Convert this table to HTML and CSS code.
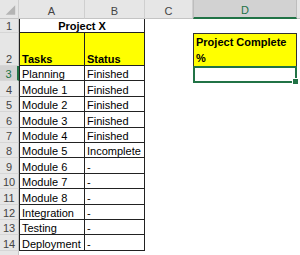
FILE: index.html
```html
<!DOCTYPE html>
<html>
<head>
<meta charset="utf-8">
<link rel="stylesheet" href="styles.css">
</head>
<body>
<div class="sheet">
  <div class="hdr corner"><svg width="19" height="18" viewBox="0 0 19 18"><polygon points="16,5 16,15 6,15" fill="#b4b4b4"/></svg></div>
  <div class="hdr col">A</div>
  <div class="hdr col">B</div>
  <div class="hdr col">C</div>
  <div class="hdr col sel">D</div>
  <div class="hdr col last"></div>

  <div class="rh">1</div>
  <div class="c title">Project X</div>
  <div class="c"></div><div class="c"></div><div class="c"></div>

  <div class="rh r2">2</div>
  <div class="c t a y b">Tasks</div>
  <div class="c t y b">Status</div>
  <div class="c"></div>
  <div class="c pc">Project Complete %</div>
  <div class="c"></div>

  <div class="rh rsel">3</div>
  <div class="c t a">Planning</div><div class="c t">Finished</div><div class="c"></div>
  <div class="c cur"><span class="handle"></span></div><div class="c"></div>

  <div class="rh">4</div>
  <div class="c t a">Module 1</div><div class="c t">Finished</div><div class="c"></div><div class="c"></div><div class="c"></div>
  <div class="rh">5</div>
  <div class="c t a">Module 2</div><div class="c t">Finished</div><div class="c"></div><div class="c"></div><div class="c"></div>
  <div class="rh">6</div>
  <div class="c t a">Module 3</div><div class="c t">Finished</div><div class="c"></div><div class="c"></div><div class="c"></div>
  <div class="rh">7</div>
  <div class="c t a">Module 4</div><div class="c t">Finished</div><div class="c"></div><div class="c"></div><div class="c"></div>
  <div class="rh">8</div>
  <div class="c t a">Module 5</div><div class="c t">Incomplete</div><div class="c"></div><div class="c"></div><div class="c"></div>
  <div class="rh">9</div>
  <div class="c t a">Module 6</div><div class="c t">-</div><div class="c"></div><div class="c"></div><div class="c"></div>
  <div class="rh">10</div>
  <div class="c t a">Module 7</div><div class="c t">-</div><div class="c"></div><div class="c"></div><div class="c"></div>
  <div class="rh">11</div>
  <div class="c t a">Module 8</div><div class="c t">-</div><div class="c"></div><div class="c"></div><div class="c"></div>
  <div class="rh">12</div>
  <div class="c t a">Integration</div><div class="c t">-</div><div class="c"></div><div class="c"></div><div class="c"></div>
  <div class="rh">13</div>
  <div class="c t a">Testing</div><div class="c t">-</div><div class="c"></div><div class="c"></div><div class="c"></div>
  <div class="rh">14</div>
  <div class="c t a">Deployment</div><div class="c t">-</div><div class="c"></div><div class="c"></div><div class="c"></div>
  <div class="rh"></div>
  <div class="c"></div><div class="c"></div><div class="c"></div><div class="c"></div><div class="c"></div>
</div>
</body>
</html>
```
FILE: styles.css
```css
html, body {
  margin: 0;
  padding: 0;
  background: #ffffff;
}
body {
  font-family: "Liberation Sans", Arial, sans-serif;
  font-size: 11px;
  color: #000;
  overflow: hidden;
}
.sheet {
  display: grid;
  grid-template-columns: 19px 66px 60px 48px 104px 3px;
  grid-template-rows: 19px 14px 33px 15px 16px 15px 16px 15px 15px 16px 15px 16px 15px 15px 16px 10px;
  width: 300px;
  height: 255px;
}
.sheet > div {
  box-sizing: border-box;
  min-width: 0;
  overflow: visible;
  position: relative;
}
.hdr {
  background: #e6e6e6;
  border-bottom: 1px solid #c4c4c4;
  border-right: 1px solid #cfcfcf;
  color: #444;
  display: flex;
  align-items: center;
  justify-content: center;
  font-size: 11px;
  padding-top: 3px;
}
.corner {
  padding: 0;
  align-items: flex-start;
  justify-content: flex-start;
}
.corner svg { display: block; }
.hdr.sel {
  background: #d2d2d2;
  border-bottom: 2px solid #217346;
  border-left: 1px solid #bdbdbd;
  border-right: 1px solid #bdbdbd;
  color: #217346;
}
.hdr.last { border-right: none; }
.rh {
  background: #e6e6e6;
  border-right: 1px solid #c4c4c4;
  border-bottom: 1px solid #d6d6d6;
  color: #444;
  display: flex;
  align-items: flex-end;
  justify-content: center;
  padding-bottom: 0;
  font-size: 11px;
}
.rh.rsel {
  background: #d2d2d2;
  color: #217346;
  border-right: 2px solid #217346;
}
.c {
  display: flex;
  align-items: flex-end;
  padding: 0 0 0 2px;
  white-space: nowrap;
}
.title {
  grid-column: span 2;
  justify-content: center;
  font-weight: bold;
  border-right: 1px solid #222;
  border-bottom: 1px solid #222;
  border-left: 1px solid #222;
  padding-left: 0;
}
.t {
  border-right: 1px solid #222;
  border-bottom: 1px solid #222;
}
.a {
  border-left: 1px solid #222;
}
.y { background: #ffff00; }
.b { font-weight: bold; }
.pc {
  background: #ffff00;
  font-weight: bold;
  white-space: normal;
  line-height: 16px;
  border: 1px solid #333;
  border-bottom: none;
  padding: 0 2px 0 2px;
}
.cur {
  border: 2px solid #217346;
  height: 17px;
}
.handle {
  position: absolute;
  right: -4px;
  bottom: -4px;
  width: 5px;
  height: 5px;
  background: #217346;
  border: 1px solid #fff;
}
```
